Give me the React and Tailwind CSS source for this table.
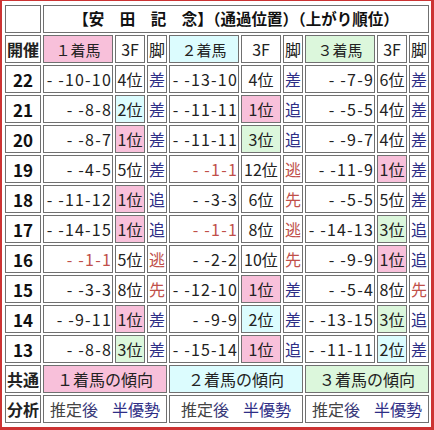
import React from 'react'

const PINK = 'bg-[#f8c0da]'
const CYAN = 'bg-[#dcfcfe]'
const GREEN = 'bg-[#dcf7dc]'

const rankBg = { '1位': PINK, '2位': CYAN, '3位': GREEN }

const rows = [
  ['22', ['- -10-10', '4位', '差'], ['- -13-10', '4位', '差'], ['- -7-9', '6位', '差']],
  ['21', ['- -8-8', '2位', '差'], ['- -11-11', '1位', '追'], ['- -5-5', '4位', '差']],
  ['20', ['- -8-7', '1位', '差'], ['- -11-11', '3位', '追'], ['- -9-7', '4位', '差']],
  ['19', ['- -4-5', '5位', '差'], ['- -1-1', '12位', '逃'], ['- -11-9', '1位', '差']],
  ['18', ['- -11-12', '1位', '追'], ['- -3-3', '6位', '先'], ['- -5-5', '5位', '差']],
  ['17', ['- -14-15', '1位', '追'], ['- -1-1', '8位', '逃'], ['- -14-13', '3位', '追']],
  ['16', ['- -1-1', '5位', '逃'], ['- -2-2', '10位', '先'], ['- -9-9', '1位', '追']],
  ['15', ['- -3-3', '8位', '先'], ['- -12-10', '1位', '差'], ['- -5-4', '8位', '先']],
  ['14', ['- -9-11', '1位', '差'], ['- -9-9', '2位', '差'], ['- -13-15', '3位', '追']],
  ['13', ['- -8-8', '3位', '差'], ['- -15-14', '1位', '追'], ['- -11-11', '2位', '差']],
]

const cell = 'border border-[#707070] flex items-center'

function Horse({ data }) {
  const [pos, rank, leg] = data
  const front = leg === '逃'
  const legRed = leg === '逃' || leg === '先'
  return (
    <>
      <div className={`${cell} justify-end pr-0 tracking-[1.2px] ${front ? 'text-[#c0504a]' : 'text-[#222]'}`}>{pos}</div>
      <div className={`${cell} justify-center ${rankBg[rank] || ''}`}>{rank}</div>
      <div className={`${cell} justify-center ${legRed ? 'text-[#c0504a]' : 'text-[#2e2e86]'}`}>{leg}</div>
    </>
  )
}

export default function App() {
  return (
    <div
      className="w-[434px] h-[430px] bg-white border-l-2 border-t border-r-[3px] border-b-[3px] border-[#cc3333] pl-[3px] pt-[4px] text-[#222] text-[16px] leading-none"
      style={{ fontFamily: '"Noto Sans CJK JP", "Noto Sans", sans-serif' }}
    >
      <div className="grid grid-cols-[36px_70px_30px_20px_70px_40px_20px_70px_30px_20px] auto-rows-[28px] gap-[2px]">
        <div className={cell}></div>
        <div className={`${cell} col-span-9 justify-center font-bold text-[15.5px] text-[#111]`}>
          【安　田　記　念】（通過位置）（上がり順位）
        </div>

        <div className={`${cell} justify-center font-bold`}>開催</div>
        <div className={`${cell} justify-center text-[15px] ${PINK}`}>１着馬</div>
        <div className={`${cell} justify-center`}>3F</div>
        <div className={`${cell} justify-center`}>脚</div>
        <div className={`${cell} justify-center text-[15px] ${CYAN}`}>２着馬</div>
        <div className={`${cell} justify-center`}>3F</div>
        <div className={`${cell} justify-center`}>脚</div>
        <div className={`${cell} justify-center text-[15px] ${GREEN}`}>３着馬</div>
        <div className={`${cell} justify-center`}>3F</div>
        <div className={`${cell} justify-center`}>脚</div>

        {rows.map(([year, a, b, c]) => (
          <React.Fragment key={year}>
            <div className={`${cell} justify-center font-bold text-[17px] text-[#111]`}>{year}</div>
            <Horse data={a} />
            <Horse data={b} />
            <Horse data={c} />
          </React.Fragment>
        ))}

        <div className={`${cell} justify-center font-bold`}>共通</div>
        <div className={`${cell} col-span-3 justify-center ${PINK}`}>１着馬の傾向</div>
        <div className={`${cell} col-span-3 justify-center ${CYAN}`}>２着馬の傾向</div>
        <div className={`${cell} col-span-3 justify-center ${GREEN}`}>３着馬の傾向</div>

        <div className={`${cell} justify-center font-bold`}>分析</div>
        {[0, 1, 2].map((i) => (
          <div key={i} className={`${cell} col-span-3 justify-center gap-[14px]`}>
            <span className="text-[#444]">推定<span className="text-[#3a3a7a]">後</span></span>
            <span className="text-[#2e2e86]">半優勢</span>
          </div>
        ))}
      </div>
    </div>
  )
}
